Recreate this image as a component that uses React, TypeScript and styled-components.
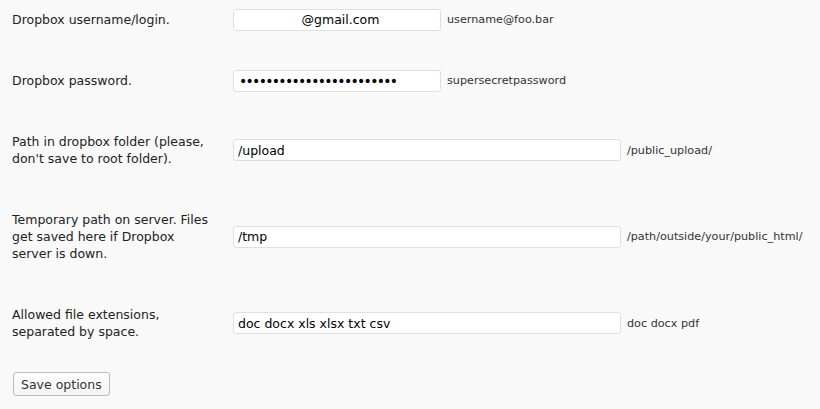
import React from "react";
import styled, { createGlobalStyle } from "styled-components";

const Global = createGlobalStyle`
  html, body { margin: 0; padding: 0; background: #f9f9f9; }
  body { font-family: "DejaVu Sans", Verdana, sans-serif; color: #333; }
`;

const Page = styled.form`
  padding: 0 12px;
  margin-top: -11px;
`;

const Table = styled.div`
  display: grid;
  grid-template-columns: 221px 1fr;
`;

const Label = styled.div`
  padding: 22px 10px 22px 0;
  font-size: 12.5px;
  line-height: 17px;
  color: #222;
  display: flex;
  flex-direction: column;
  justify-content: center;
`;

const Line = styled.span`
  white-space: nowrap;
`;

const Field = styled.div`
  display: flex;
  align-items: center;
  gap: 6px;
`;

const Input = styled.input<{ $wide?: boolean; $center?: boolean }>`
  box-sizing: border-box;
  width: ${(p) => (p.$wide ? "388px" : "208px")};
  height: 22px;
  margin: 0;
  padding: 0 4px;
  border: 1px solid #dfdfdf;
  border-radius: 3px;
  background: #fff;
  font-family: "DejaVu Sans", Verdana, sans-serif;
  font-size: 12.5px;
  color: #000;
  outline: none;
  text-align: ${(p) => (p.$center ? "center" : "left")};
  text-indent: ${(p) => (p.$center ? "7px" : "0")};
  &[type="password"] {
    font-size: 14px;
    letter-spacing: -1.7px;
    padding-left: 5px;
  }
`;

const Hint = styled.span`
  font-size: 11.2px;
  color: #333;
  white-space: nowrap;
`;

const Actions = styled.div`
  padding-top: 10px;
`;

const Button = styled.button`
  box-sizing: border-box;
  height: 24px;
  margin-left: 1px;
  padding: 0 7px;
  border: 1px solid #bbb;
  border-radius: 3px;
  background: linear-gradient(#fefefe, #f4f4f4);
  font-family: "DejaVu Sans", Verdana, sans-serif;
  font-size: 12.5px;
  color: #333;
  cursor: pointer;
`;

type Row = {
  label: string[];
  value: string;
  hint: string;
  wide?: boolean;
  center?: boolean;
  password?: boolean;
};

const rows: Row[] = [
  { label: ["Dropbox username/login."], value: "@gmail.com", hint: "username@foo.bar", center: true },
  { label: ["Dropbox password."], value: "xxxxxxxxxxxxxxxxxxxxxxxx", hint: "supersecretpassword", password: true },
  { label: ["Path in dropbox folder (please,", "don't save to root folder)."], value: "/upload", hint: "/public_upload/", wide: true },
  {
    label: ["Temporary path on server. Files", "get saved here if Dropbox", "server is down."],
    value: "/tmp",
    hint: "/path/outside/your/public_html/",
    wide: true,
  },
  { label: ["Allowed file extensions,", "separated by space."], value: "doc docx xls xlsx txt csv", hint: "doc docx pdf", wide: true },
];

export default function App() {
  return (
    <>
      <Global />
      <Page onSubmit={(e) => e.preventDefault()}>
        <Table>
          {rows.map((r, i) => (
            <React.Fragment key={i}>
              <Label>
                {r.label.map((l, j) => (
                  <Line key={j}>{l}</Line>
                ))}
              </Label>
              <Field>
                <Input
                  type={r.password ? "password" : "text"}
                  defaultValue={r.value}
                  $wide={r.wide}
                  $center={r.center}
                />
                <Hint>{r.hint}</Hint>
              </Field>
            </React.Fragment>
          ))}
        </Table>
        <Actions>
          <Button type="submit">Save options</Button>
        </Actions>
      </Page>
    </>
  );
}
